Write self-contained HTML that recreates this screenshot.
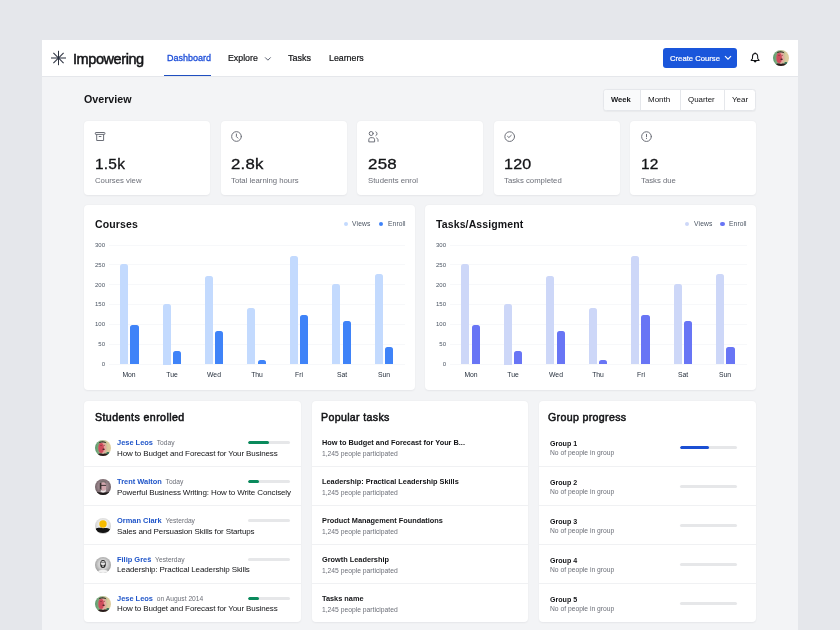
<!DOCTYPE html>
<html><head><meta charset="utf-8">
<style>
*{box-sizing:border-box;margin:0;padding:0}
html,body{width:840px;height:630px;overflow:hidden;background:#e5e7eb;font-family:"Liberation Sans",sans-serif;color:#131417}
.a{position:absolute}
.t,.yl,.dl{will-change:transform}
.t{position:absolute;line-height:1;white-space:nowrap}
#app{position:absolute;left:42px;top:40px;width:756px;height:590px;background:#f3f4f6}
#hdr{position:absolute;left:42px;top:40px;width:756px;height:37px;background:#fff;border-bottom:1px solid #e5e7eb}
.card{position:absolute;background:#fff;border-radius:4px;box-shadow:0 0.5px 2px rgba(17,24,39,0.06)}
.ic{position:absolute;width:12px;height:12px}
.bar{position:absolute;border-radius:2.5px 2.5px 0 0}
.grid{position:absolute;height:1px;background:#f7f8fa}
.yl{position:absolute;width:20px;text-align:right;font-size:6px;line-height:1;color:#4b5563}
.dl{position:absolute;width:30px;text-align:center;font-size:6.8px;line-height:1;color:#1f2937}
.div{position:absolute;height:1px;background:#f0f1f3}
.trk{position:absolute;height:3px;border-radius:2px;background:#e6e7e9;overflow:hidden}
.fill{position:absolute;left:0;top:0;height:100%;border-radius:2px}
</style></head><body>
<div id="app"></div>
<div id="hdr"></div>

<!-- logo -->
<svg class="a" style="left:50px;top:50px" width="17" height="17" viewBox="0 0 17 17">
 <g stroke="#2d3340" stroke-width="1.05" stroke-linecap="butt">
  <line x1="1" y1="8" x2="16" y2="8"/>
  <line x1="8.5" y1="0.8" x2="8.5" y2="15.2"/>
  <line x1="3.4" y1="2.9" x2="13.6" y2="13.1"/>
  <line x1="13.6" y1="2.9" x2="3.4" y2="13.1"/>
 </g>
</svg>
<div class="t" style="left:72.9px;top:51.8px;font-size:14.5px;-webkit-text-stroke:0.5px #131417;letter-spacing:-0.42px">Impowering</div>

<!-- nav -->
<div class="t" style="left:166.5px;top:54px;font-size:9px;color:#1d4ed8;-webkit-text-stroke:0.3px #1d4ed8">Dashboard</div>
<div class="a" style="left:164.3px;top:74.5px;width:47px;height:1.6px;background:#1f4fc0"></div>
<div class="t" style="left:228px;top:54px;font-size:8.8px;color:#131417;-webkit-text-stroke:0.2px #131417">Explore</div>
<svg class="a" style="left:264px;top:55.5px" width="8" height="6" viewBox="0 0 8 6"><path d="M1.1 1.4 L3.9 4.2 L6.7 1.4" fill="none" stroke="#5b6170" stroke-width="1"/></svg>
<div class="t" style="left:288px;top:54px;font-size:9px;color:#131417;-webkit-text-stroke:0.2px #131417">Tasks</div>
<div class="t" style="left:328.5px;top:54px;font-size:8.8px;color:#131417;-webkit-text-stroke:0.2px #131417">Learners</div>

<!-- create course -->
<div class="a" style="left:663px;top:48px;width:74px;height:19.5px;background:#1a56db;border-radius:3px"></div>
<div class="t" style="left:669.8px;top:54.6px;font-size:7.7px;color:#fff;-webkit-text-stroke:0.2px #fff">Create Course</div>
<svg class="a" style="left:724px;top:55.3px" width="8" height="6" viewBox="0 0 8 6"><path d="M1 1.2 L4 4.2 L7 1.2" fill="none" stroke="#fff" stroke-width="1.2"/></svg>

<!-- bell -->
<svg class="a" style="left:750px;top:52px" width="11" height="12" viewBox="0 0 11 12">
 <path d="M5.1 1.5 C3.3 1.5 2.5 2.9 2.5 4.7 V6.3 C2.5 7.1 1.5 7.7 1.1 8.4 H9.1 C8.7 7.7 7.7 7.1 7.7 6.3 V4.7 C7.7 2.9 6.9 1.5 5.1 1.5 Z" fill="none" stroke="#131417" stroke-width="1.05" stroke-linejoin="round"/>
 <path d="M5.1 0.8 V1.5" stroke="#131417" stroke-width="1" stroke-linecap="round"/>
 <path d="M4 9 C4.1 10.6 6.1 10.6 6.2 9 Z" fill="#131417" stroke="#131417" stroke-width="0.6"/>
</svg>
<!-- avatar header -->
<svg class="a" style="left:773px;top:50px" width="16" height="16" viewBox="0 0 16 16"><defs><clipPath id="chdr"><circle cx="8" cy="8" r="8"/></clipPath><linearGradient id="ghdr" x1="0" x2="1"><stop offset="0.05" stop-color="#5f9d70"/><stop offset="0.5" stop-color="#b3bf92"/><stop offset="0.85" stop-color="#dccb9d"/></linearGradient></defs><g clip-path="url(#chdr)"><rect width="16" height="16" fill="url(#ghdr)"/><ellipse cx="7.6" cy="7.8" rx="3.9" ry="5.9" fill="#e6a89f"/><ellipse cx="6.1" cy="8" rx="2.8" ry="5.1" fill="#cf4c5c"/><path d="M3.7 3.4 C3.9 0.6 11.2 0.4 11.4 3.4 C10 2.3 5.2 2.3 3.7 3.4 Z" fill="#2d2a22"/><circle cx="6" cy="5.5" r="0.55" fill="#6a3030"/><circle cx="9.2" cy="5.2" r="0.5" fill="#6a3030"/><ellipse cx="8.6" cy="9.3" rx="1.25" ry="0.7" fill="#4a2020"/><path d="M1.5 16 C2.5 13.4 5.5 13.3 8 13.9 C10.5 13.3 13.5 13 14.5 16 Z" fill="#2a1b1d"/><ellipse cx="13" cy="13.1" rx="1.7" ry="1.2" fill="#2f6b55"/></g></svg>
<!-- overview -->
<div class="t" style="left:83.9px;top:94.2px;font-size:10.7px;font-weight:700">Overview</div>
<div class="a" style="left:603px;top:88.6px;width:152.8px;height:22.4px;background:#fff;border:1px solid #e5e7eb;border-radius:3.5px;overflow:hidden;box-shadow:0 0.5px 1px rgba(0,0,0,0.04)">
 <div class="a" style="left:0;top:0;width:36px;height:100%;background:#f9fafb"></div>
 <div class="a" style="left:35.8px;top:0;width:1px;height:100%;background:#e5e7eb"></div>
 <div class="a" style="left:75.8px;top:0;width:1px;height:100%;background:#e5e7eb"></div>
 <div class="a" style="left:119.8px;top:0;width:1px;height:100%;background:#e5e7eb"></div>
</div>
<div class="t" style="left:611.2px;top:96px;font-size:7.6px;font-weight:700">Week</div>
<div class="t" style="left:648px;top:96px;font-size:8px;color:#131417">Month</div>
<div class="t" style="left:687.5px;top:96px;font-size:7.9px;color:#131417">Quarter</div>
<div class="t" style="left:732px;top:96px;font-size:8px;color:#131417">Year</div>

<!-- stat cards -->
<div class="card" style="left:84.00px;top:121px;width:126.00px;height:74px"></div>
<svg class="ic" style="left:93.50px;top:130.9px" viewBox="0 0 12 12"><g fill="none" stroke="#6c6f78" stroke-width="1" stroke-linejoin="round"><rect x="1.3" y="1.5" width="9.6" height="1.9" rx="0.5"/><path d="M2.7 3.4 V9.5 H9.6 V3.4"/><path d="M4.8 5.5 H7.4"/></g></svg>
<div class="t" style="left:94.80px;top:157.2px;font-size:14.6px;color:#131417;-webkit-text-stroke:0.3px #131417;letter-spacing:0.2px;transform:scaleX(1.06);transform-origin:0 0">1.5k</div>
<div class="t" style="left:94.60px;top:177.16px;font-size:7.75px;color:#6c6f78;font-weight:400;">Courses view</div>
<div class="card" style="left:220.50px;top:121px;width:126.00px;height:74px"></div>
<svg class="ic" style="left:230.00px;top:130.9px" viewBox="0 0 12 12"><g fill="none" stroke="#6c6f78" stroke-width="1" stroke-linecap="round" stroke-linejoin="round"><circle cx="6.5" cy="5.5" r="4.85"/><path d="M6.4 3 V5.6 L7.9 7.1"/></g></svg>
<div class="t" style="left:231.30px;top:157.2px;font-size:14.6px;color:#131417;-webkit-text-stroke:0.3px #131417;letter-spacing:0.2px;transform:scaleX(1.15);transform-origin:0 0">2.8k</div>
<div class="t" style="left:231.10px;top:177.16px;font-size:7.75px;color:#6c6f78;font-weight:400;">Total learning hours</div>
<div class="card" style="left:357.00px;top:121px;width:126.00px;height:74px"></div>
<svg class="ic" style="left:366.50px;top:130.9px" viewBox="0 0 12 12"><g fill="none" stroke="#6c6f78" stroke-width="1" stroke-linecap="round" stroke-linejoin="round"><circle cx="4.2" cy="2.5" r="2"/><path d="M1.8 10.5 V8.8 C1.8 7.5 2.6 6.7 3.8 6.7 H5.6 C6.8 6.7 7.6 7.5 7.6 8.8 V10.5 Z"/><path d="M8.9 0.8 C10.5 1.2 10.5 4.3 8.9 4.7"/><path d="M9.7 7 C10.6 7.3 11 8.2 11 9.2 V10.3"/></g></svg>
<div class="t" style="left:367.80px;top:157.2px;font-size:14.6px;color:#131417;-webkit-text-stroke:0.3px #131417;letter-spacing:0.2px;transform:scaleX(1.16);transform-origin:0 0">258</div>
<div class="t" style="left:367.60px;top:177.16px;font-size:7.75px;color:#6c6f78;font-weight:400;">Students enrol</div>
<div class="card" style="left:493.50px;top:121px;width:126.00px;height:74px"></div>
<svg class="ic" style="left:503.00px;top:130.9px" viewBox="0 0 12 12"><g fill="none" stroke="#6c6f78" stroke-width="1" stroke-linecap="round" stroke-linejoin="round"><circle cx="6.7" cy="5.6" r="4.85"/><path d="M4.6 5.4 L5.9 6.5 L8.3 4.3"/></g></svg>
<div class="t" style="left:504.30px;top:157.2px;font-size:14.6px;color:#131417;-webkit-text-stroke:0.3px #131417;letter-spacing:0.2px;transform:scaleX(1.1);transform-origin:0 0">120</div>
<div class="t" style="left:504.10px;top:177.16px;font-size:7.75px;color:#6c6f78;font-weight:400;">Tasks completed</div>
<div class="card" style="left:630.00px;top:121px;width:126.00px;height:74px"></div>
<svg class="ic" style="left:639.50px;top:130.9px" viewBox="0 0 12 12"><g fill="none" stroke="#6c6f78" stroke-width="1" stroke-linecap="round"><circle cx="6.5" cy="5.6" r="4.85"/><path d="M6.5 3.3 V5.8"/><path d="M6.5 7.4 V7.5"/></g></svg>
<div class="t" style="left:640.80px;top:157.2px;font-size:14.6px;color:#131417;-webkit-text-stroke:0.3px #131417;letter-spacing:0.2px;transform:scaleX(1.06);transform-origin:0 0">12</div>
<div class="t" style="left:640.60px;top:177.16px;font-size:7.75px;color:#6c6f78;font-weight:400;">Tasks due</div>
<div class="card" style="left:84.00px;top:205px;width:330.75px;height:185px"></div>
<div class="t" style="left:94.80px;top:218.62px;font-size:10.5px;color:#131417;font-weight:700;letter-spacing:0.12px">Courses</div>
<div class="a" style="left:343.85px;top:221.7px;width:4.2px;height:4.2px;border-radius:50%;background:#c3dafe"></div>
<div class="t" style="left:352.45px;top:220.53px;font-size:6.7px;color:#4b5563;font-weight:400;letter-spacing:0.15px">Views</div>
<div class="a" style="left:379.15px;top:221.7px;width:4.2px;height:4.2px;border-radius:50%;background:#3f83f8"></div>
<div class="t" style="left:387.85px;top:220.53px;font-size:6.7px;color:#4b5563;font-weight:400;letter-spacing:0.1px">Enroll</div>
<div class="grid" style="left:109.00px;top:244.50px;width:296.25px"></div>
<div class="yl" style="left:85.00px;top:241.70px">300</div>
<div class="grid" style="left:109.00px;top:264.43px;width:296.25px"></div>
<div class="yl" style="left:85.00px;top:261.63px">250</div>
<div class="grid" style="left:109.00px;top:284.36px;width:296.25px"></div>
<div class="yl" style="left:85.00px;top:281.56px">200</div>
<div class="grid" style="left:109.00px;top:304.29px;width:296.25px"></div>
<div class="yl" style="left:85.00px;top:301.49px">150</div>
<div class="grid" style="left:109.00px;top:324.22px;width:296.25px"></div>
<div class="yl" style="left:85.00px;top:321.42px">100</div>
<div class="grid" style="left:109.00px;top:344.15px;width:296.25px"></div>
<div class="yl" style="left:85.00px;top:341.35px">50</div>
<div class="grid" style="left:109.00px;top:364.08px;width:296.25px"></div>
<div class="yl" style="left:85.00px;top:361.28px">0</div>
<div class="bar" style="left:120.10px;top:264.13px;width:8px;height:100.37px;background:#c3dafe"></div>
<div class="bar" style="left:130.40px;top:324.63px;width:8.2px;height:39.87px;background:#3f83f8"></div>
<div class="dl" style="left:114.45px;top:372.11px">Mon</div>
<div class="bar" style="left:162.55px;top:304.00px;width:8px;height:60.50px;background:#c3dafe"></div>
<div class="bar" style="left:172.85px;top:350.55px;width:8.2px;height:13.95px;background:#3f83f8"></div>
<div class="dl" style="left:156.90px;top:372.11px">Tue</div>
<div class="bar" style="left:205.00px;top:276.09px;width:8px;height:88.41px;background:#c3dafe"></div>
<div class="bar" style="left:215.30px;top:330.61px;width:8.2px;height:33.89px;background:#3f83f8"></div>
<div class="dl" style="left:199.35px;top:372.11px">Wed</div>
<div class="bar" style="left:247.45px;top:307.99px;width:8px;height:56.51px;background:#c3dafe"></div>
<div class="bar" style="left:257.75px;top:359.72px;width:8.2px;height:4.78px;background:#3f83f8"></div>
<div class="dl" style="left:241.80px;top:372.11px">Thu</div>
<div class="bar" style="left:289.90px;top:256.16px;width:8px;height:108.34px;background:#c3dafe"></div>
<div class="bar" style="left:300.20px;top:314.67px;width:8.2px;height:49.83px;background:#3f83f8"></div>
<div class="dl" style="left:284.25px;top:372.11px">Fri</div>
<div class="bar" style="left:332.35px;top:284.07px;width:8px;height:80.43px;background:#c3dafe"></div>
<div class="bar" style="left:342.65px;top:320.65px;width:8.2px;height:43.85px;background:#3f83f8"></div>
<div class="dl" style="left:326.70px;top:372.11px">Sat</div>
<div class="bar" style="left:374.80px;top:274.10px;width:8px;height:90.40px;background:#c3dafe"></div>
<div class="bar" style="left:385.10px;top:346.56px;width:8.2px;height:17.94px;background:#3f83f8"></div>
<div class="dl" style="left:369.15px;top:372.11px">Sun</div>
<div class="card" style="left:425.25px;top:205px;width:330.75px;height:185px"></div>
<div class="t" style="left:436.05px;top:218.62px;font-size:10.5px;color:#131417;font-weight:700;letter-spacing:0.12px">Tasks/Assigment</div>
<div class="a" style="left:685.10px;top:221.7px;width:4.2px;height:4.2px;border-radius:50%;background:#cdd7f8"></div>
<div class="t" style="left:693.70px;top:220.53px;font-size:6.7px;color:#4b5563;font-weight:400;letter-spacing:0.15px">Views</div>
<div class="a" style="left:720.40px;top:221.7px;width:4.2px;height:4.2px;border-radius:50%;background:#6875f5"></div>
<div class="t" style="left:729.10px;top:220.53px;font-size:6.7px;color:#4b5563;font-weight:400;letter-spacing:0.1px">Enroll</div>
<div class="grid" style="left:450.25px;top:244.50px;width:296.25px"></div>
<div class="yl" style="left:426.25px;top:241.70px">300</div>
<div class="grid" style="left:450.25px;top:264.43px;width:296.25px"></div>
<div class="yl" style="left:426.25px;top:261.63px">250</div>
<div class="grid" style="left:450.25px;top:284.36px;width:296.25px"></div>
<div class="yl" style="left:426.25px;top:281.56px">200</div>
<div class="grid" style="left:450.25px;top:304.29px;width:296.25px"></div>
<div class="yl" style="left:426.25px;top:301.49px">150</div>
<div class="grid" style="left:450.25px;top:324.22px;width:296.25px"></div>
<div class="yl" style="left:426.25px;top:321.42px">100</div>
<div class="grid" style="left:450.25px;top:344.15px;width:296.25px"></div>
<div class="yl" style="left:426.25px;top:341.35px">50</div>
<div class="grid" style="left:450.25px;top:364.08px;width:296.25px"></div>
<div class="yl" style="left:426.25px;top:361.28px">0</div>
<div class="bar" style="left:461.35px;top:264.13px;width:8px;height:100.37px;background:#cdd7f8"></div>
<div class="bar" style="left:471.65px;top:324.63px;width:8.2px;height:39.87px;background:#6875f5"></div>
<div class="dl" style="left:455.70px;top:372.11px">Mon</div>
<div class="bar" style="left:503.80px;top:304.00px;width:8px;height:60.50px;background:#cdd7f8"></div>
<div class="bar" style="left:514.10px;top:350.55px;width:8.2px;height:13.95px;background:#6875f5"></div>
<div class="dl" style="left:498.15px;top:372.11px">Tue</div>
<div class="bar" style="left:546.25px;top:276.09px;width:8px;height:88.41px;background:#cdd7f8"></div>
<div class="bar" style="left:556.55px;top:330.61px;width:8.2px;height:33.89px;background:#6875f5"></div>
<div class="dl" style="left:540.60px;top:372.11px">Wed</div>
<div class="bar" style="left:588.70px;top:307.99px;width:8px;height:56.51px;background:#cdd7f8"></div>
<div class="bar" style="left:599.00px;top:359.72px;width:8.2px;height:4.78px;background:#6875f5"></div>
<div class="dl" style="left:583.05px;top:372.11px">Thu</div>
<div class="bar" style="left:631.15px;top:256.16px;width:8px;height:108.34px;background:#cdd7f8"></div>
<div class="bar" style="left:641.45px;top:314.67px;width:8.2px;height:49.83px;background:#6875f5"></div>
<div class="dl" style="left:625.50px;top:372.11px">Fri</div>
<div class="bar" style="left:673.60px;top:284.07px;width:8px;height:80.43px;background:#cdd7f8"></div>
<div class="bar" style="left:683.90px;top:320.65px;width:8.2px;height:43.85px;background:#6875f5"></div>
<div class="dl" style="left:667.95px;top:372.11px">Sat</div>
<div class="bar" style="left:716.05px;top:274.10px;width:8px;height:90.40px;background:#cdd7f8"></div>
<div class="bar" style="left:726.35px;top:346.56px;width:8.2px;height:17.94px;background:#6875f5"></div>
<div class="dl" style="left:710.40px;top:372.11px">Sun</div>
<div class="card" style="left:84.00px;top:401px;width:216.67px;height:221px"></div>
<div class="t" style="left:94.80px;top:411.70px;font-size:10.6px;color:#131417;font-weight:400;-webkit-text-stroke:0.55px #131417;letter-spacing:0.42px">Students enrolled</div>
<div class="div" style="left:84.00px;top:466.15px;width:216.67px"></div>
<div class="div" style="left:84.00px;top:505.10px;width:216.67px"></div>
<div class="div" style="left:84.00px;top:544.05px;width:216.67px"></div>
<div class="div" style="left:84.00px;top:583.00px;width:216.67px"></div>
<svg class="a" style="left:95.00px;top:439.70px" width="16" height="16" viewBox="0 0 16 16"><defs><clipPath id="cs0"><circle cx="8" cy="8" r="8"/></clipPath><linearGradient id="gs0" x1="0" x2="1"><stop offset="0.05" stop-color="#5f9d70"/><stop offset="0.5" stop-color="#b3bf92"/><stop offset="0.85" stop-color="#dccb9d"/></linearGradient></defs><g clip-path="url(#cs0)"><rect width="16" height="16" fill="url(#gs0)"/><ellipse cx="7.6" cy="7.8" rx="3.9" ry="5.9" fill="#e6a89f"/><ellipse cx="6.1" cy="8" rx="2.8" ry="5.1" fill="#cf4c5c"/><path d="M3.7 3.4 C3.9 0.6 11.2 0.4 11.4 3.4 C10 2.3 5.2 2.3 3.7 3.4 Z" fill="#2d2a22"/><circle cx="6" cy="5.5" r="0.55" fill="#6a3030"/><circle cx="9.2" cy="5.2" r="0.5" fill="#6a3030"/><ellipse cx="8.6" cy="9.3" rx="1.25" ry="0.7" fill="#4a2020"/><path d="M1.5 16 C2.5 13.4 5.5 13.3 8 13.9 C10.5 13.3 13.5 13 14.5 16 Z" fill="#2a1b1d"/><ellipse cx="13" cy="13.1" rx="1.7" ry="1.2" fill="#2f6b55"/></g></svg>
<div class="t" style="left:117.00px;top:439.24px;font-size:7.45px;color:#1f55c9;font-weight:700">Jese Leos<span style="font-weight:400;color:#6c6f78;font-size:6.7px;margin-left:3.8px">Today</span></div>
<div class="t" style="left:117.00px;top:449.62px;font-size:8px;color:#131417;font-weight:400;letter-spacing:-0.12px">How to Budget and Forecast for Your Business</div>
<div class="trk" style="left:248.40px;top:440.90px;width:42px"><div class="fill" style="width:50.0%;background:#0a8a5c"></div></div>
<svg class="a" style="left:95.00px;top:478.65px" width="16" height="16" viewBox="0 0 16 16"><defs><clipPath id="cs1"><circle cx="8" cy="8" r="8"/></clipPath><radialGradient id="gs1" cx="0.5" cy="0.45" r="0.6"><stop offset="0.5" stop-color="#9a868c"/><stop offset="1" stop-color="#5e5054"/></radialGradient></defs><g clip-path="url(#cs1)"><rect width="16" height="16" fill="url(#gs1)"/><ellipse cx="8.2" cy="3.6" rx="3.2" ry="2" fill="#7a7070"/><ellipse cx="8.2" cy="7.6" rx="3" ry="4.4" fill="#d2a6ae"/><rect x="4.8" y="4" width="1.6" height="8" fill="#3a3030"/><path d="M5.4 6.4 H11.1" stroke="#2e2828" stroke-width="0.9"/><path d="M5.6 9.4 C6 12.6 10.4 12.6 10.8 9.4 L10.8 12.6 C9.4 13.8 7 13.8 5.6 12.6 Z" fill="#ebe6e6"/><path d="M0 16 L0 13.6 C3 12.8 5 13.2 8 14 C11 13.2 13 12.8 16 13.6 L16 16 Z" fill="#1b1818"/></g></svg>
<div class="t" style="left:117.00px;top:478.19px;font-size:7.45px;color:#1f55c9;font-weight:700">Trent Walton<span style="font-weight:400;color:#6c6f78;font-size:6.7px;margin-left:3.8px">Today</span></div>
<div class="t" style="left:117.00px;top:488.57px;font-size:8px;color:#131417;font-weight:400;letter-spacing:-0.12px">Powerful Business Writing: How to Write Concisely</div>
<div class="trk" style="left:248.40px;top:479.85px;width:42px"><div class="fill" style="width:25.0%;background:#0a8a5c"></div></div>
<svg class="a" style="left:95.00px;top:517.60px" width="16" height="16" viewBox="0 0 16 16"><defs><clipPath id="cs2"><circle cx="8" cy="8" r="8"/></clipPath><radialGradient id="gs2" cx="0.5" cy="0.4" r="0.65"><stop offset="0.4" stop-color="#ebebea"/><stop offset="1" stop-color="#c4c4c4"/></radialGradient></defs><g clip-path="url(#cs2)"><rect width="16" height="16" fill="url(#gs2)"/><circle cx="8" cy="6" r="3.7" fill="#f5bb00"/><path d="M0.6 11 C2.6 9.4 5.6 9.8 8 10.2 C10.4 9.6 13 9.8 15.2 11.2 C14.2 13.8 11 15 8 15 C5 15 1.8 14 0.6 11 Z" fill="#131313"/></g></svg>
<div class="t" style="left:117.00px;top:517.14px;font-size:7.45px;color:#1f55c9;font-weight:700">Orman Clark<span style="font-weight:400;color:#6c6f78;font-size:6.7px;margin-left:3.8px">Yesterday</span></div>
<div class="t" style="left:117.00px;top:527.52px;font-size:8px;color:#131417;font-weight:400;letter-spacing:-0.12px">Sales and Persuasion Skills for Startups</div>
<div class="trk" style="left:248.40px;top:518.80px;width:42px"><div class="fill" style="width:0%;background:#0a8a5c"></div></div>
<svg class="a" style="left:95.00px;top:556.55px" width="16" height="16" viewBox="0 0 16 16"><defs><clipPath id="cs3"><circle cx="8" cy="8" r="8"/></clipPath><radialGradient id="gs3" cx="0.5" cy="0.45" r="0.6"><stop offset="0.45" stop-color="#d4d4d4"/><stop offset="1" stop-color="#8e8e8e"/></radialGradient></defs><g clip-path="url(#cs3)"><rect width="16" height="16" fill="url(#gs3)"/><path d="M2 16 C2.5 11.6 13.5 11.6 14 16 Z" fill="#f2f2f2"/><ellipse cx="8" cy="6.9" rx="2.8" ry="4" fill="#262626"/><ellipse cx="8" cy="6.3" rx="2.1" ry="2.4" fill="#e2e2e2"/><rect x="5.8" y="5.4" width="4.4" height="0.6" fill="#5a5a5a"/><ellipse cx="8" cy="9.4" rx="0.9" ry="0.5" fill="#cfcfcf"/></g></svg>
<div class="t" style="left:117.00px;top:556.09px;font-size:7.45px;color:#1f55c9;font-weight:700">Filip Greš<span style="font-weight:400;color:#6c6f78;font-size:6.7px;margin-left:3.8px">Yesterday</span></div>
<div class="t" style="left:117.00px;top:566.47px;font-size:8px;color:#131417;font-weight:400;letter-spacing:-0.12px">Leadership: Practical Leadership Skills</div>
<div class="trk" style="left:248.40px;top:557.75px;width:42px"><div class="fill" style="width:0%;background:#0a8a5c"></div></div>
<svg class="a" style="left:95.00px;top:595.50px" width="16" height="16" viewBox="0 0 16 16"><defs><clipPath id="cs4"><circle cx="8" cy="8" r="8"/></clipPath><linearGradient id="gs4" x1="0" x2="1"><stop offset="0.05" stop-color="#5f9d70"/><stop offset="0.5" stop-color="#b3bf92"/><stop offset="0.85" stop-color="#dccb9d"/></linearGradient></defs><g clip-path="url(#cs4)"><rect width="16" height="16" fill="url(#gs4)"/><ellipse cx="7.6" cy="7.8" rx="3.9" ry="5.9" fill="#e6a89f"/><ellipse cx="6.1" cy="8" rx="2.8" ry="5.1" fill="#cf4c5c"/><path d="M3.7 3.4 C3.9 0.6 11.2 0.4 11.4 3.4 C10 2.3 5.2 2.3 3.7 3.4 Z" fill="#2d2a22"/><circle cx="6" cy="5.5" r="0.55" fill="#6a3030"/><circle cx="9.2" cy="5.2" r="0.5" fill="#6a3030"/><ellipse cx="8.6" cy="9.3" rx="1.25" ry="0.7" fill="#4a2020"/><path d="M1.5 16 C2.5 13.4 5.5 13.3 8 13.9 C10.5 13.3 13.5 13 14.5 16 Z" fill="#2a1b1d"/><ellipse cx="13" cy="13.1" rx="1.7" ry="1.2" fill="#2f6b55"/></g></svg>
<div class="t" style="left:117.00px;top:595.04px;font-size:7.45px;color:#1f55c9;font-weight:700">Jese Leos<span style="font-weight:400;color:#6c6f78;font-size:6.7px;margin-left:3.8px">on August 2014</span></div>
<div class="t" style="left:117.00px;top:605.42px;font-size:8px;color:#131417;font-weight:400;letter-spacing:-0.12px">How to Budget and Forecast for Your Business</div>
<div class="trk" style="left:248.40px;top:596.70px;width:42px"><div class="fill" style="width:25.0%;background:#0a8a5c"></div></div>
<div class="card" style="left:311.67px;top:401px;width:216.67px;height:221px"></div>
<div class="t" style="left:320.57px;top:411.70px;font-size:10.6px;color:#131417;font-weight:400;-webkit-text-stroke:0.5px #131417;letter-spacing:0.35px">Popular tasks</div>
<div class="div" style="left:311.67px;top:466.15px;width:216.67px"></div>
<div class="div" style="left:311.67px;top:505.10px;width:216.67px"></div>
<div class="div" style="left:311.67px;top:544.05px;width:216.67px"></div>
<div class="div" style="left:311.67px;top:583.00px;width:216.67px"></div>
<div class="t" style="left:322.17px;top:439.32px;font-size:7.35px;color:#131417;font-weight:700;">How to Budget and Forecast for Your B...</div>
<div class="t" style="left:322.17px;top:450.72px;font-size:6.74px;color:#6c6f78;font-weight:400;">1,245 people participated</div>
<div class="t" style="left:322.17px;top:478.27px;font-size:7.35px;color:#131417;font-weight:700;">Leadership: Practical Leadership Skills</div>
<div class="t" style="left:322.17px;top:489.67px;font-size:6.74px;color:#6c6f78;font-weight:400;">1,245 people participated</div>
<div class="t" style="left:322.17px;top:517.22px;font-size:7.35px;color:#131417;font-weight:700;">Product Management Foundations</div>
<div class="t" style="left:322.17px;top:528.62px;font-size:6.74px;color:#6c6f78;font-weight:400;">1,245 people participated</div>
<div class="t" style="left:322.17px;top:556.17px;font-size:7.35px;color:#131417;font-weight:700;">Growth Leadership</div>
<div class="t" style="left:322.17px;top:567.57px;font-size:6.74px;color:#6c6f78;font-weight:400;">1,245 people participated</div>
<div class="t" style="left:322.17px;top:595.12px;font-size:7.35px;color:#131417;font-weight:700;">Tasks name</div>
<div class="t" style="left:322.17px;top:606.52px;font-size:6.74px;color:#6c6f78;font-weight:400;">1,245 people participated</div>
<div class="card" style="left:539.33px;top:401px;width:216.67px;height:221px"></div>
<div class="t" style="left:548.23px;top:411.70px;font-size:10.6px;color:#131417;font-weight:400;-webkit-text-stroke:0.5px #131417;letter-spacing:0.35px">Group progress</div>
<div class="div" style="left:539.33px;top:466.15px;width:216.67px"></div>
<div class="div" style="left:539.33px;top:505.10px;width:216.67px"></div>
<div class="div" style="left:539.33px;top:544.05px;width:216.67px"></div>
<div class="div" style="left:539.33px;top:583.00px;width:216.67px"></div>
<div class="t" style="left:549.83px;top:440.76px;font-size:7.1px;color:#131417;font-weight:700;">Group 1</div>
<div class="t" style="left:549.83px;top:449.92px;font-size:6.72px;color:#6c6f78;font-weight:400;">No of people in group</div>
<div class="trk" style="left:680.03px;top:446.10px;width:57.2px;height:3.2px"><div class="fill" style="width:50%;background:#1b4fd3"></div></div>
<div class="t" style="left:549.83px;top:479.71px;font-size:7.1px;color:#131417;font-weight:700;">Group 2</div>
<div class="t" style="left:549.83px;top:488.87px;font-size:6.72px;color:#6c6f78;font-weight:400;">No of people in group</div>
<div class="trk" style="left:680.03px;top:485.05px;width:57.2px;height:3.2px"><div class="fill" style="width:0%;background:#1b4fd3"></div></div>
<div class="t" style="left:549.83px;top:518.66px;font-size:7.1px;color:#131417;font-weight:700;">Group 3</div>
<div class="t" style="left:549.83px;top:527.82px;font-size:6.72px;color:#6c6f78;font-weight:400;">No of people in group</div>
<div class="trk" style="left:680.03px;top:524.00px;width:57.2px;height:3.2px"><div class="fill" style="width:0%;background:#1b4fd3"></div></div>
<div class="t" style="left:549.83px;top:557.61px;font-size:7.1px;color:#131417;font-weight:700;">Group 4</div>
<div class="t" style="left:549.83px;top:566.77px;font-size:6.72px;color:#6c6f78;font-weight:400;">No of people in group</div>
<div class="trk" style="left:680.03px;top:562.95px;width:57.2px;height:3.2px"><div class="fill" style="width:0%;background:#1b4fd3"></div></div>
<div class="t" style="left:549.83px;top:596.56px;font-size:7.1px;color:#131417;font-weight:700;">Group 5</div>
<div class="t" style="left:549.83px;top:605.72px;font-size:6.72px;color:#6c6f78;font-weight:400;">No of people in group</div>
<div class="trk" style="left:680.03px;top:601.90px;width:57.2px;height:3.2px"><div class="fill" style="width:0%;background:#1b4fd3"></div></div>
</body></html>
